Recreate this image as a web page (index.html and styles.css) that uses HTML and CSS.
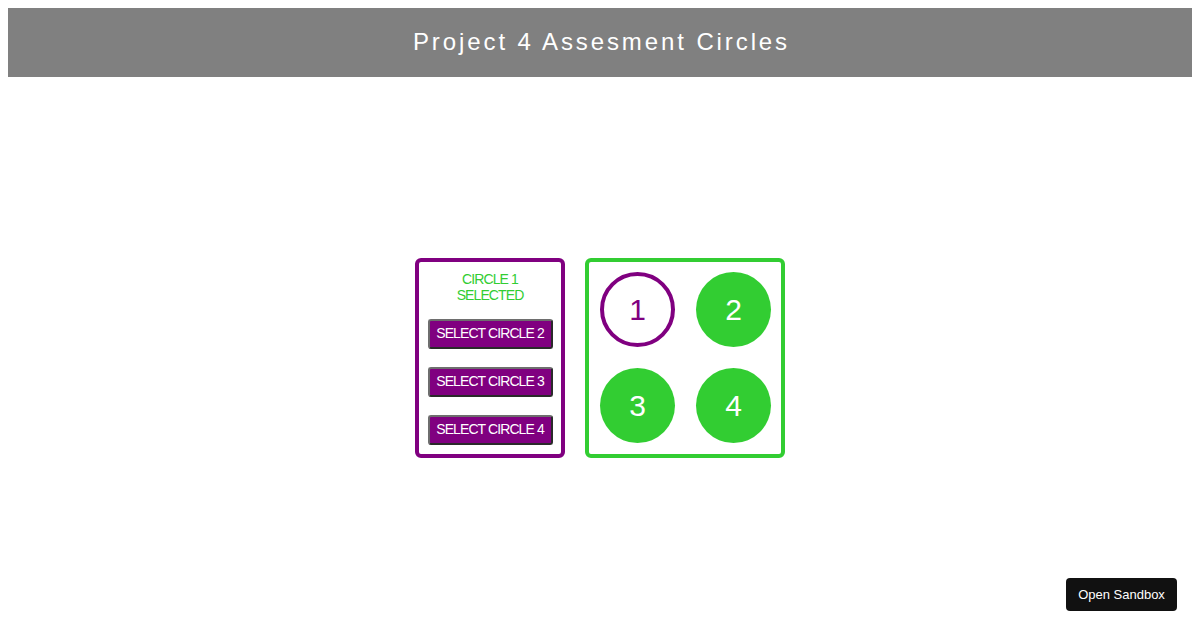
FILE: index.html
```html
<!DOCTYPE html>
<html>
<head>
<meta charset="utf-8">
<link rel="stylesheet" href="styles.css">
</head>
<body>
<header class="header">Project 4 Assesment Circles</header>
<main class="main">
  <section class="controls">
    <div class="status">CIRCLE 1<br>SELECTED</div>
    <button class="btn">SELECT CIRCLE 2</button>
    <button class="btn">SELECT CIRCLE 3</button>
    <button class="btn">SELECT CIRCLE 4</button>
  </section>
  <section class="board">
    <div class="circle selected">1</div>
    <div class="circle">2</div>
    <div class="circle">3</div>
    <div class="circle">4</div>
  </section>
</main>
<a class="sandbox">Open Sandbox</a>
</body>
</html>
```
FILE: styles.css
```css
body {
  margin: 8px;
  font-family: "Liberation Sans", Arial, sans-serif;
  background: #fff;
}
.header {
  height: 69px;
  background: #808080;
  color: #fff;
  display: flex;
  align-items: center;
  justify-content: center;
  font-size: 24px;
  letter-spacing: 2.9px;
  padding-left: 3px;
  padding-bottom: 1px;
  box-sizing: border-box;
}
.main {
  display: flex;
  justify-content: center;
  gap: 20px;
  margin-top: 181px;
}
.controls {
  box-sizing: border-box;
  width: 150px;
  height: 200px;
  border: 4px solid #800080;
  border-radius: 6px;
  display: flex;
  flex-direction: column;
  align-items: center;
  padding-top: 9px;
}
.status {
  color: #32cd32;
  font-size: 14px;
  line-height: 16px;
  letter-spacing: -0.9px;
  text-align: center;
  margin-bottom: 16px;
  flex-shrink: 0;
}
.btn {
  box-sizing: border-box;
  flex-shrink: 0;
  width: 125px;
  height: 30px;
  margin-bottom: 18px;
  background: #800080;
  color: #fff;
  font-family: "Liberation Sans", Arial, sans-serif;
  font-size: 14px;
  letter-spacing: -0.9px;
  white-space: nowrap;
  border: 2px solid;
  border-color: #6e6e6e #2a2a2a #2a2a2a #6e6e6e;
  border-radius: 3px;
  padding: 0 0 2px 0;
}
.btn:last-child {
  margin-bottom: 0;
}
.board {
  box-sizing: border-box;
  width: 200px;
  height: 200px;
  border: 4px solid #32cd32;
  border-radius: 6px;
  display: grid;
  grid-template-columns: 75px 75px;
  grid-template-rows: 75px 75px;
  gap: 21px;
  padding: 10px 11px;
}
.circle {
  box-sizing: border-box;
  border-radius: 50%;
  background: #32cd32;
  color: #fff;
  font-size: 30px;
  display: flex;
  align-items: center;
  justify-content: center;
}
.circle.selected {
  background: #fff;
  border: 4px solid #800080;
  color: #800080;
}
.sandbox {
  position: fixed;
  right: 23px;
  bottom: 19px;
  width: 111px;
  height: 33px;
  box-sizing: border-box;
  background: #111;
  color: #fff;
  border-radius: 4px;
  font-size: 13px;
  display: flex;
  align-items: center;
  justify-content: center;
}
```
